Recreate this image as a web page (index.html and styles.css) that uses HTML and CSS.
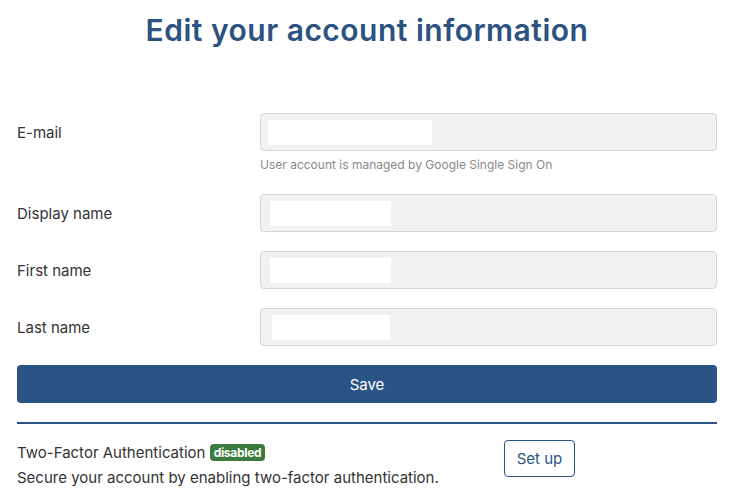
FILE: index.html
```html
<!DOCTYPE html>
<html>
<head>
<meta charset="utf-8">
<link rel="stylesheet" href="styles.css">
</head>
<body>
<div class="page">
  <h1 class="title">Edit your account information</h1>
  <form class="form">
    <div class="row">
      <label class="label">E-mail</label>
      <div class="field">
        <div class="input"><span class="mask mask-email"></span></div>
        <div class="help">User account is managed by Google Single Sign On</div>
      </div>
    </div>
    <div class="row">
      <label class="label">Display name</label>
      <div class="field">
        <div class="input"><span class="mask mask-name"></span></div>
      </div>
    </div>
    <div class="row">
      <label class="label">First name</label>
      <div class="field">
        <div class="input"><span class="mask mask-name"></span></div>
      </div>
    </div>
    <div class="row">
      <label class="label">Last name</label>
      <div class="field">
        <div class="input"><span class="mask mask-last"></span></div>
      </div>
    </div>
    <button type="button" class="save">Save</button>
  </form>
  <hr class="divider">
  <div class="tfa">
    <div class="tfa-text">
      <div class="tfa-title">Two-Factor Authentication <span class="badge">disabled</span></div>
      <div class="tfa-desc">Secure your account by enabling two-factor authentication.</div>
    </div>
    <button type="button" class="setup">Set up</button>
  </div>
</div>
</body>
</html>
```
FILE: styles.css
```css
* { box-sizing: border-box; }
body {
  margin: 0;
  background: #fff;
  font-family: Inter, "Liberation Sans", Arial, sans-serif;
  color: #333;
}
.page {
  width: 700px;
  margin-left: 17px;
}
.title {
  margin: 0;
  padding-top: 12px;
  text-align: center;
  font-size: 30px;
  font-weight: 600;
  color: #2c5282;
  line-height: 36px;
  letter-spacing: 0.5px;
}
.form {
  margin-top: 65px;
  display: flex;
  flex-direction: column;
}
.row {
  display: flex;
  align-items: flex-start;
  margin-bottom: 19px;
}
.label {
  width: 243px;
  height: 38px;
  display: flex;
  align-items: center;
  font-size: 15px;
  color: #333;
}
.field {
  width: 457px;
}
.input {
  height: 38px;
  background: #f1f1f1;
  border: 1px solid #d3d6dc;
  border-radius: 4px;
  padding: 6px 7px;
}
.mask {
  display: block;
  height: 25px;
  background: #fff;
}
.mask-email { width: 164px; }
.mask-name { width: 121px; margin-left: 2px; }
.mask-last { width: 118px; margin-left: 4px; }
.help {
  margin-top: 6px;
  margin-bottom: 3px;
  font-size: 12px;
  color: #8a8a8a;
  line-height: 15px;
}
.save {
  height: 38px;
  border: none;
  border-radius: 4px;
  background: #2a5485;
  color: #fff;
  font-family: Inter, "Liberation Sans", Arial, sans-serif;
  font-size: 15px;
}
.divider {
  margin: 19px 0 0;
  border: none;
  height: 2px;
  background: #2a5485;
}
.tfa {
  display: flex;
  align-items: flex-start;
  padding-top: 18px;
}
.tfa-text {
  width: 487px;
}
.tfa-title {
  font-size: 15px;
  line-height: 22px;
  color: #333;
}
.badge {
  display: inline-block;
  background: #3b7b3e;
  color: #fff;
  font-size: 12px;
  font-weight: 700;
  line-height: 17px;
  padding: 0 4px;
  border-radius: 4px;
  vertical-align: 1px;
  letter-spacing: -0.3px;
}
.tfa-desc {
  margin-top: 4px;
  font-size: 15px;
  line-height: 20px;
  color: #333;
}
.setup {
  margin-top: -2px;
  height: 37px;
  width: 71px;
  background: #fff;
  border: 1px solid #2a5485;
  border-radius: 4px;
  color: #2a5485;
  font-family: Inter, "Liberation Sans", Arial, sans-serif;
  font-size: 15px;
}
```
